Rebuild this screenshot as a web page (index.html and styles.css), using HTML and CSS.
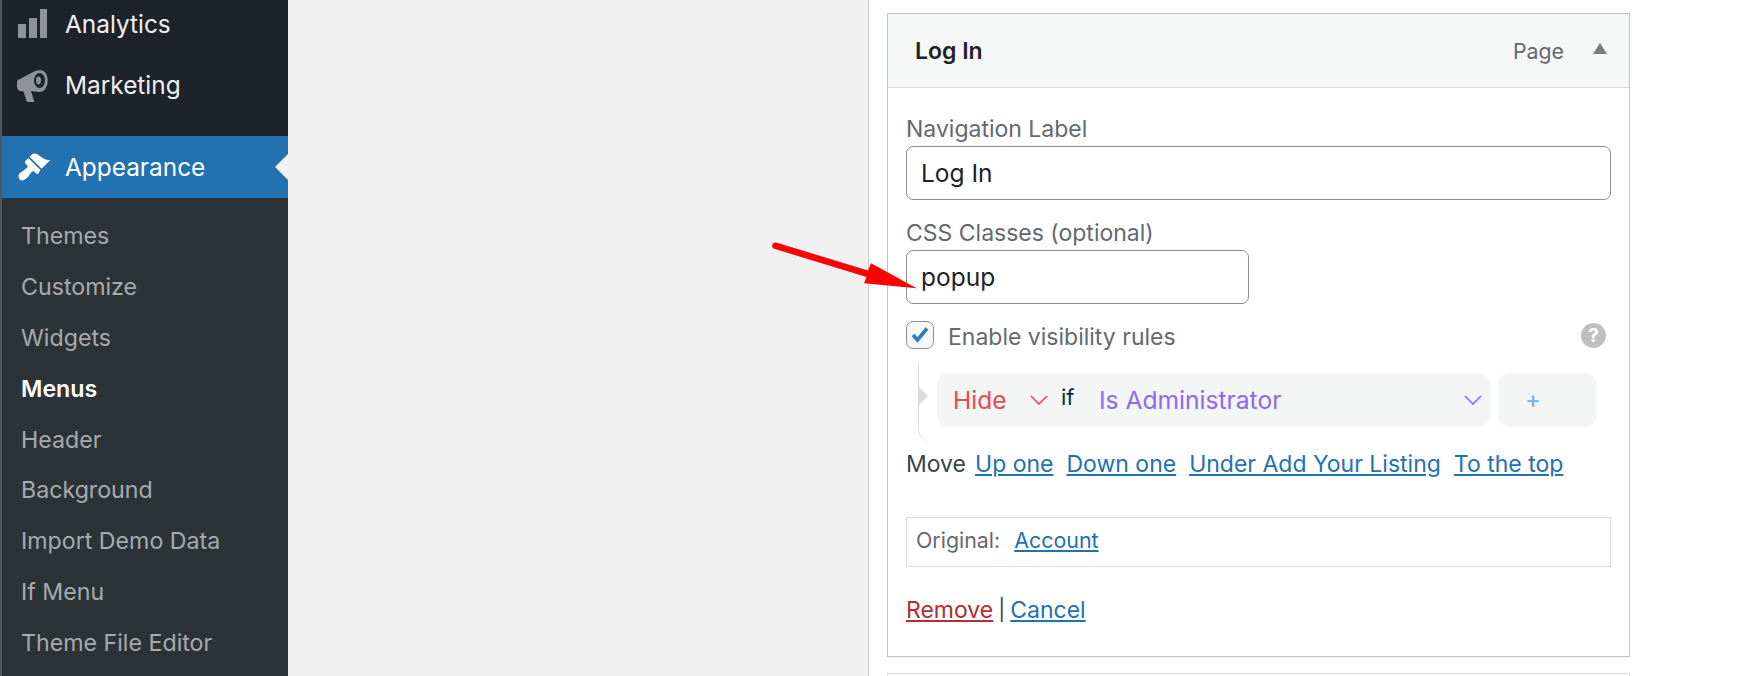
FILE: index.html
```html
<!DOCTYPE html>
<html lang="en">
<head>
    <meta charset="UTF-8">
    <title>Menus</title>
    <link rel="stylesheet" href="styles.css">
</head>
<body>
    <div class="sidebar">
        <ul class="menu">
            <li class="menu-item">
                <svg class="menu-icon" viewBox="-1 -2 34 34"><path d="M0 15h8v14H0zM11 9h8v20h-8zM22 0h7v29h-7z"/></svg>
                Analytics
            </li>
            <li class="menu-item">
                <svg class="menu-icon" viewBox="17 67.5 34 34">
                    <path d="M17 82C17 80 18 79 20 78.5L33 71.5C36 70 39 69.5 42 70 46 71 48 76 47.7 81 47.4 87 44 92 39 91.5L31 90.5 34 100C34.3 101 33.8 101.5 33 101.4L28 101.4C27.3 101.5 26.8 101.2 26.6 100.5L23.5 91 20 90.5C18 90 17 88 17 86z"/>
                    <ellipse class="bell-hole" cx="39.5" cy="80" rx="5.5" ry="7.5"/>
                    <ellipse cx="38.5" cy="80" rx="2.5" ry="4"/>
                </svg>
                Marketing
            </li>
        </ul>
        <div class="menu-current">
            <svg class="menu-icon" viewBox="0 0 20 20"><path d="M14.48 11.06L7.41 3.99l1.5-1.5c.5-.56 2.3-.47 3.51.32 1.21.8 1.43 1.28 2.91 2.1 1.18.64 2.45 1.26 4.45.85zm-.71.71L6.7 4.7 4.93 6.47c-.39.39-.39 1.02 0 1.41l1.06 1.06c.39.39.39 1.03 0 1.42-.6.6-1.43 1.11-2.21 1.69-.35.26-.7.53-1.01.84C1.43 13.23.55 14.9 1.07 16.5c.31.95 1.2 1.6 2.2 1.4 1.42-.3 2.85-1.6 3.8-2.9.6-.78 1.11-1.61 1.71-2.21.39-.39 1.03-.39 1.42 0l1.06 1.06c.39.39 1.02.39 1.41 0z"/></svg>
            Appearance
        </div>
        <ul class="submenu">
            <li>Themes</li>
            <li>Customize</li>
            <li>Widgets</li>
            <li class="active">Menus</li>
            <li>Header</li>
            <li>Background</li>
            <li>Import Demo Data</li>
            <li>If Menu</li>
            <li>Theme File Editor</li>
        </ul>
    </div>

    <div class="gutter"></div>

    <div class="content">
        <div class="card">
            <div class="card-head">
                <span class="card-title">Log In</span>
                <span class="card-type">Page</span>
                <span class="card-toggle"></span>
            </div>
            <div class="card-body">
                <label class="field-label" for="navLabel">Navigation Label</label>
                <input class="text-input" type="text" id="navLabel" value="Log In">

                <label class="field-label second" for="cssClasses">CSS Classes (optional)</label>
                <input class="text-input short" type="text" id="cssClasses" value="popup">

                <div class="visibility">
                    <span class="checkbox">
                        <svg viewBox="0 0 20 20"><path d="M3 10l4.5 5L17 3.5" fill="none" stroke="#2e7cc4" stroke-width="3.6"/></svg>
                    </span>
                    <span class="visibility-text">Enable visibility rules</span>
                    <span class="help">?</span>
                </div>

                <div class="rule-wrap">
                    <div class="rule">
                        <span class="rule-hide">Hide</span>
                        <svg class="chevron" viewBox="0 0 18 10"><path d="M1 1l8 8 8-8" fill="none" stroke="#e54c4f" stroke-width="1.6"/></svg>
                        <span class="rule-if">if</span>
                        <span class="rule-role">Is Administrator</span>
                        <svg class="chevron" viewBox="0 0 18 10"><path d="M1 1l8 8 8-8" fill="none" stroke="#8b68f5" stroke-width="1.6"/></svg>
                    </div>
                    <div class="rule-add">+</div>
                </div>

                <div class="move">
                    <span class="move-label">Move</span>
                    <a href="#">Up one</a>
                    <a href="#">Down one</a>
                    <a href="#">Under Add Your Listing</a>
                    <a href="#">To the top</a>
                </div>

                <div class="original"><span>Original:</span> <a href="#">Account</a></div>

                <div class="actions">
                    <a class="remove" href="#">Remove</a>
                    <span class="sep">|</span>
                    <a href="#">Cancel</a>
                </div>
            </div>
        </div>
        <div class="card next"></div>
    </div>

    <svg class="arrow" viewBox="0 0 150 50"><path d="M6 2.5L98 30.5 101 23.3 146.7 48.3 94 43.3 96.5 37 3.5 8.5C1 7 2 2 6 2.5z" fill="#fe0000"/></svg>
</body>
</html>
```

FILE: styles.css
```css
* {
    box-sizing: border-box;
}
html, body {
    height: 100%;
}
body {
    margin: 0;
    display: flex;
    overflow: hidden;
    background: #fff;
    font-family: Inter, "Liberation Sans", sans-serif;
    font-size: 23px;
    color: #3c434a;
}
a {
    color: #2271b1;
}

/* sidebar */
.sidebar {
    width: 288px;
    flex-shrink: 0;
    background: #2c3337;
    border-left: 2px solid #50565b;
    overflow: hidden;
}
.menu {
    list-style: none;
    margin: -7px 0 0;
    padding: 0 0 21px;
    background: #1e2229;
}
.menu-item, .menu-current {
    display: flex;
    align-items: center;
    height: 61px;
    padding-left: 15px;
    font-size: 24.4px;
    color: #f0f0f1;
}
.menu-icon {
    width: 34px;
    height: 34px;
    margin-right: 14px;
    fill: #8f9397;
}
.menu-icon .bell-hole {
    fill: #1e2229;
}
.menu-current {
    position: relative;
    height: 62px;
    background: #2271b1;
    color: #fff;
}
.menu-current .menu-icon {
    fill: #fff;
}
.menu-current::after {
    content: "";
    position: absolute;
    right: 0;
    top: 18px;
    border: 13px solid transparent;
    border-left-width: 0;
    border-right-color: #f0f0f1;
}
.submenu {
    list-style: none;
    margin: 0;
    padding: 13px 0 0;
    font-size: 23.2px;
    color: #a7aaad;
}
.submenu li {
    height: 50.9px;
    line-height: 50px;
    padding-left: 19px;
}
.submenu .active {
    font-weight: 600;
    color: #fff;
}

.gutter {
    width: 581px;
    flex-shrink: 0;
    background: #f0f0f1;
    border-right: 1px solid #d0d0d0;
}

/* menu item card */
.content {
    flex: 1;
    padding: 13px 0 0 18px;
}
.card {
    width: 743px;
    height: 644px;
    border: 1px solid #c3c4c7;
    box-shadow: 0 1px 3px rgba(0, 0, 0, 0.05);
}
.card.next {
    height: 100px;
    margin-top: 16px;
    border-color: #dcdcde;
}
.card-head {
    display: flex;
    align-items: center;
    height: 74px;
    padding: 0 22px 0 27px;
    background: #f6f7f7;
    border-bottom: 1px solid #dcdcde;
}
.card-title {
    flex: 1;
    font-weight: 600;
    color: #1d2327;
}
.card-type {
    font-size: 21.3px;
    color: #646970;
}
.card-toggle {
    width: 0;
    height: 0;
    margin: 0 0 4px 29px;
    border: 7px solid transparent;
    border-top-width: 0;
    border-bottom: 11px solid #787c82;
}
.card-body {
    padding: 28px 18px 0 18px;
}
.field-label {
    display: block;
    height: 30px;
    line-height: 26px;
    color: #646970;
}
.field-label.second {
    margin-top: 20px;
}
.text-input {
    display: block;
    width: 100%;
    height: 54px;
    padding: 0 14px;
    border: 1px solid #8c8f94;
    border-radius: 7px;
    font: inherit;
    font-size: 24.5px;
    color: #1d2327;
}
.text-input.short {
    width: 343px;
}
.visibility {
    display: flex;
    align-items: center;
    margin-top: 16px;
    height: 30px;
    padding-right: 5px;
    color: #646970;
}
.checkbox {
    width: 28px;
    height: 28px;
    border: 1px solid #8c8f94;
    border-radius: 7px;
    padding: 3px;
    background: #f6f7f7;
}
.checkbox svg {
    display: block;
}
.visibility-text {
    flex: 1;
    margin-left: 14px;
    padding-top: 3px;
}
.help {
    width: 25px;
    height: 25px;
    border-radius: 50%;
    background: #bfbfbf;
    color: #fff;
    font-weight: 700;
    font-size: 19px;
    line-height: 25px;
    text-align: center;
}
.rule-wrap {
    display: flex;
    gap: 8px;
    position: relative;
    margin: 14px 0 0 12px;
    padding: 9px 14px 14px 18px;
    border-left: 1px solid #dcdcde;
    border-radius: 0 0 0 12px;
}
.rule-wrap::before {
    content: "";
    position: absolute;
    left: 0;
    top: 23px;
    border: 9px solid transparent;
    border-right-width: 0;
    border-left-color: #dcdcde;
}
.rule {
    display: flex;
    align-items: center;
    width: 553px;
    height: 54px;
    padding: 0 8px 0 16px;
    background: #f4f5f5;
    border-radius: 12px;
    font-size: 24.6px;
}
.rule-hide {
    color: #e54c4f;
    width: 77px;
}
.rule .chevron {
    width: 18px;
    height: 10px;
}
.rule-if {
    margin: -7px 0 0 13px;
    width: 38px;
    font-size: 22px;
    color: #102a3a;
}
.rule-role {
    flex: 1;
    color: #8b68f5;
}
.rule-add {
    width: 99px;
    height: 54px;
    padding-left: 27px;
    background: #f4f5f5;
    border-radius: 12px;
    font-size: 24px;
    line-height: 54px;
    color: #6fb0ee;
}
.move {
    display: flex;
    gap: 13px;
    margin-top: 8px;
    line-height: 30px;
}
.move-label {
    margin-right: -4px;
}
.original {
    display: flex;
    gap: 14px;
    align-items: center;
    height: 50px;
    margin-top: 38px;
    padding: 0 0 5px 9px;
    border: 1px solid #dcdcde;
    font-size: 21.4px;
    color: #646970;
}
.actions {
    display: flex;
    gap: 5px;
    margin-top: 28px;
    line-height: 30px;
}
.sep {
    font-size: 21px;
}
.remove {
    color: #b32d2e;
}

/* annotation drawn over the screenshot */
.arrow {
    position: absolute;
    left: 770px;
    top: 240px;
    width: 150px;
    height: 50px;
}
```
